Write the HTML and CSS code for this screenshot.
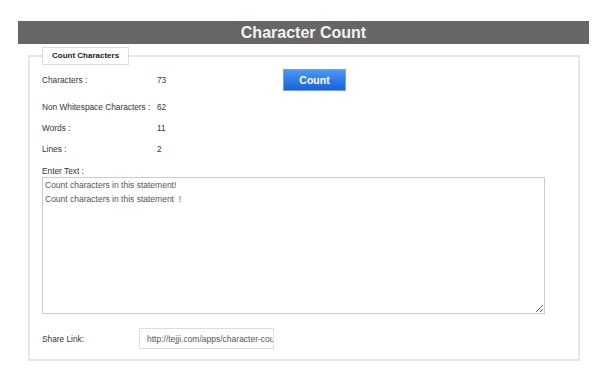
FILE: index.html
```html
<!DOCTYPE html>
<html>
<head>
<meta charset="utf-8">
<link rel="stylesheet" href="styles.css">
</head>
<body>
<div class="page">
  <div class="header">Character Count</div>
  <fieldset class="panel">
    <legend class="legend">Count Characters</legend>
    <div class="row row-first">
      <span class="label">Characters :</span>
      <span class="value">73</span>
      <button class="count-btn">Count</button>
    </div>
    <div class="row">
      <span class="label">Non Whitespace Characters :</span>
      <span class="value">62</span>
    </div>
    <div class="row">
      <span class="label">Words :</span>
      <span class="value">11</span>
    </div>
    <div class="row">
      <span class="label">Lines :</span>
      <span class="value">2</span>
    </div>
    <div class="enter-label">Enter Text :</div>
    <textarea class="text-input">Count characters in this statement!
Count characters in this statement  !</textarea>
    <div class="share-row">
      <span class="share-label">Share Link:</span>
      <input class="share-input" type="text" value="http://tejji.com/apps/character-count">
    </div>
  </fieldset>
</div>
</body>
</html>
```

FILE: styles.css
```css
html, body {
  margin: 0;
  padding: 0;
  background: #ffffff;
}
body {
  font-family: "Liberation Sans", Arial, sans-serif;
  font-size: 8.3px;
  color: #333333;
}
.page {
  padding-top: 21px;
}
.header {
  margin-left: 18px;
  width: 571px;
  height: 23px;
  line-height: 23px;
  background: #666666;
  color: #f2f2f2;
  font-size: 16px;
  font-weight: bold;
  text-align: center;
}
.panel {
  margin: 3px 0 0 28px;
  width: 552px;
  box-sizing: border-box;
  border: 2px solid #e6e6e6;
  padding: 0 12px 10px 12px;
  min-inline-size: 0;
}
.legend {
  margin-left: 0;
  padding: 0 9px;
  height: 18px;
  box-sizing: border-box;
  line-height: 16px;
  border: 1px solid #dddddd;
  background: #ffffff;
  font-weight: bold;
  font-size: 8px;
  color: #222222;
}
.row {
  display: flex;
  align-items: center;
  height: 21px;
}
.row-first {
  height: 22px;
  margin-top: 4px;
  margin-bottom: 5px;
}
.label {
  width: 115px;
  flex: none;
}
.value {
  width: 126px;
  flex: none;
}
.count-btn {
  width: 63px;
  height: 22px;
  border: 1px solid #6aa6f2;
  background: linear-gradient(#4a98f5, #1a5fdc);
  color: #ffffff;
  font-family: "Liberation Sans", Arial, sans-serif;
  font-weight: bold;
  font-size: 10.5px;
  padding: 0;
  margin: 0;
}
.enter-label {
  margin-top: 6px;
  line-height: 12px;
  height: 12px;
}
.text-input {
  display: block;
  width: 503px;
  height: 137px;
  box-sizing: border-box;
  margin: 0;
  border: 1px solid #cccccc;
  padding: 0 2px;
  font-family: "Liberation Sans", Arial, sans-serif;
  font-size: 8.5px;
  line-height: 14px;
  color: #555555;
  resize: both;
}
.share-row {
  display: flex;
  align-items: center;
  margin-top: 14px;
}
.share-label {
  width: 97px;
  flex: none;
}
.share-input {
  width: 135px;
  height: 21px;
  box-sizing: border-box;
  margin: 0;
  border: 1px solid #dddddd;
  padding: 0 0 0 7px;
  font-family: "Liberation Sans", Arial, sans-serif;
  font-size: 8.5px;
  color: #555555;
}
```
